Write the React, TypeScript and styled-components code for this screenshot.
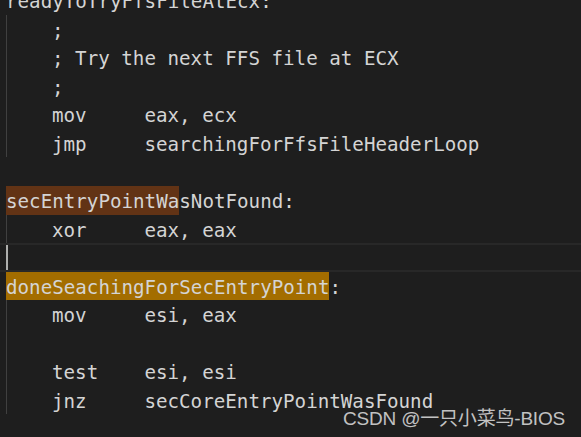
import React from 'react';
import styled, { createGlobalStyle, css } from 'styled-components';

const GlobalStyle = createGlobalStyle`
  html, body {
    margin: 0;
    padding: 0;
    background: #1e1e1e;
    overflow: hidden;
  }
`;

const Editor = styled.div`
  position: relative;
  width: 581px;
  height: 437px;
  overflow: hidden;
  background: #1e1e1e;
`;

const Lines = styled.div`
  margin-top: -14px;
  padding-left: 6px;
  font-family: 'DejaVu Sans Mono', 'Liberation Mono', monospace;
  font-size: 19.2px;
  color: #d4d4d4;
`;

const Line = styled.div<{ $current?: boolean }>`
  box-sizing: border-box;
  display: flex;
  align-items: stretch;
  height: 28.57px;
  line-height: 31px;
  white-space: pre;
  ${({ $current }) =>
    $current &&
    css`
      margin-left: -6px;
      padding-left: 6px;
      border-top: 2px solid #282828;
      border-bottom: 2px solid #282828;
    `}
`;

const Indent = styled.span`
  box-sizing: border-box;
  width: 46px;
  flex: none;
  border-left: 1px solid #404040;
`;

const Mark = styled.span<{ $tone: 'word' | 'find' }>`
  background: ${({ $tone }) => ($tone === 'word' ? '#623315' : '#a36d00')};
`;

const Cursor = styled.span`
  width: 2px;
  background: #aeafad;
`;

const Watermark = styled.div`
  position: absolute;
  right: 16px;
  bottom: 7px;
  font-family: 'Liberation Sans', 'Noto Sans CJK SC', sans-serif;
  font-size: 19px;
  color: rgba(225, 225, 225, 0.85);
  letter-spacing: -0.2px;
`;

type Row =
  | { kind: 'label'; text: string; mark?: string; tone?: 'word' | 'find' }
  | { kind: 'code'; text: string }
  | { kind: 'blank'; guide?: boolean }
  | { kind: 'current' };

const rows: Row[] = [
  { kind: 'label', text: 'readyToTryFfsFileAtEcx:' },
  { kind: 'code', text: ';' },
  { kind: 'code', text: '; Try the next FFS file at ECX' },
  { kind: 'code', text: ';' },
  { kind: 'code', text: 'mov     eax, ecx' },
  { kind: 'code', text: 'jmp     searchingForFfsFileHeaderLoop' },
  { kind: 'blank' },
  { kind: 'label', text: 'secEntryPointWasNotFound:', mark: 'secEntryPointWa', tone: 'word' },
  { kind: 'code', text: 'xor     eax, eax' },
  { kind: 'current' },
  { kind: 'label', text: 'doneSeachingForSecEntryPoint:', mark: 'doneSeachingForSecEntryPoint', tone: 'find' },
  { kind: 'code', text: 'mov     esi, eax' },
  { kind: 'blank', guide: true },
  { kind: 'code', text: 'test    esi, esi' },
  { kind: 'code', text: 'jnz     secCoreEntryPointWasFound' },
  { kind: 'blank' },
];

const renderRow = (row: Row, i: number) => {
  switch (row.kind) {
    case 'label':
      if (row.mark) {
        return (
          <Line key={i}>
            <Mark $tone={row.tone ?? 'word'}>{row.mark}</Mark>
            <span>{row.text.slice(row.mark.length)}</span>
          </Line>
        );
      }
      return (
        <Line key={i}>
          <span>{row.text}</span>
        </Line>
      );
    case 'code':
      return (
        <Line key={i}>
          <Indent />
          <span>{row.text}</span>
        </Line>
      );
    case 'blank':
      return <Line key={i}>{row.guide ? <Indent /> : ' '}</Line>;
    case 'current':
      return (
        <Line key={i} $current>
          <Cursor />
        </Line>
      );
  }
};

export default function App() {
  return (
    <Editor>
      <GlobalStyle />
      <Lines>{rows.map(renderRow)}</Lines>
      <Watermark>CSDN @一只小菜鸟-BIOS</Watermark>
    </Editor>
  );
}
